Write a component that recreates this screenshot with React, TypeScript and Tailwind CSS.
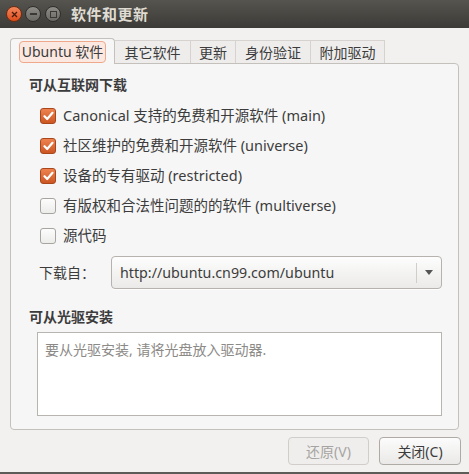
import React from "react";

const FONT = '"Noto Sans", "Noto Sans CJK SC", sans-serif';

const sources = [
  { label: "Canonical 支持的免费和开源软件 (main)", checked: true },
  { label: "社区维护的免费和开源软件 (universe)", checked: true },
  { label: "设备的专有驱动 (restricted)", checked: true },
  { label: "有版权和合法性问题的的软件 (multiverse)", checked: false },
  { label: "源代码", checked: false },
];

const tabs = ["其它软件", "更新", "身份验证", "附加驱动"];
const tabWidths = ["w-[76px]", "w-[45px]", "w-[75px]", "w-[74px]"];

function CheckBox({ checked }: { checked: boolean }) {
  if (checked) {
    return (
      <span className="flex h-[16px] w-[16px] items-center justify-center rounded-[3px] border border-[#a9461a] bg-gradient-to-b from-[#ee8350] to-[#cc5622]">
        <svg width="11" height="10" viewBox="0 0 11 10">
          <path d="M1.5 5.2 L4.2 8 L9.5 1.8" fill="none" stroke="#fff" strokeWidth="2.2" strokeLinecap="round" strokeLinejoin="round" />
        </svg>
      </span>
    );
  }
  return <span className="block h-[16px] w-[16px] rounded-[3px] border border-[#a8a5a1] bg-gradient-to-b from-[#fcfcfc] to-[#ececeb]" />;
}

export default function App() {
  return (
    <div className="flex h-[474px] w-[469px] flex-col overflow-hidden bg-[#f2f1f0] text-[#3c3c3c]" style={{ fontFamily: FONT }}>
      {/* title bar */}
      <div className="flex h-[28px] shrink-0 items-center bg-gradient-to-b from-[#55544f] to-[#3c3b37] pl-[6px]">
        <span className="flex h-[16px] w-[16px] items-center justify-center rounded-full border border-[#6e2d12] bg-gradient-to-b from-[#f3865a] to-[#df4b16]">
          <svg width="7" height="7" viewBox="0 0 7 7">
            <path d="M1 1 L6 6 M6 1 L1 6" stroke="#4a1c08" strokeWidth="1.3" />
          </svg>
        </span>
        <span className="ml-[3px] flex h-[16px] w-[16px] items-center justify-center rounded-full border border-[#2f2e2b] bg-gradient-to-b from-[#8f8d88] to-[#6b6964]">
          <span className="block h-[1.5px] w-[7px] bg-[#3a3935]" />
        </span>
        <span className="ml-[4px] flex h-[16px] w-[16px] items-center justify-center rounded-full border border-[#2f2e2b] bg-gradient-to-b from-[#8f8d88] to-[#6b6964]">
          <span className="block h-[7px] w-[7px] border-[1.5px] border-[#3a3935]" />
        </span>
        <span className="ml-[10px] text-[15px] font-bold tracking-[0.5px] text-[#dfdbd2]">软件和更新</span>
      </div>

      {/* notebook */}
      <div className="flex flex-col px-[10px] pt-[10px]">
        <div className="flex h-[25px] items-end">
          <div className="relative z-10 -mb-px flex h-[26px] w-[105px] items-center justify-center rounded-t-[4px] border border-b-0 border-[#c4c1bd] bg-[#f6f6f6]">
            <span className="rounded-[4px] border border-[#f0a88a] bg-[#fbe9e1] px-[2px] text-[14px] leading-[20px]">Ubuntu 软件</span>
          </div>
          {tabs.map((t, i) => (
            <div key={t} className={`flex h-[23px] items-center justify-center border-r border-t border-[#d5d2cf] bg-[#eeedec] text-[14px] ${tabWidths[i]}`}>
              {t}
            </div>
          ))}
        </div>
        <div className="flex h-[367px] flex-col rounded-b-[4px] rounded-tr-[4px] border border-[#c4c1bd] bg-[#f6f6f6] pl-[18px] pr-[14px] pt-[11px]">
          <div className="text-[14px] font-bold leading-[20px]">可从互联网下载</div>
          <div className="mt-[6px] flex flex-col pl-[11px]">
            {sources.map((s) => (
              <div key={s.label} className="flex h-[30px] items-center gap-[7px]">
                <CheckBox checked={s.checked} />
                <span className="text-[14.5px]">{s.label}</span>
              </div>
            ))}
          </div>
          <div className="mt-[5px] flex h-[33px] items-center pl-[10px]">
            <span className="w-[72px] text-[14px]">下载自：</span>
            <div className="flex h-[33px] w-[331px] items-center rounded-[4px] border border-[#b6b2ad] bg-gradient-to-b from-[#fdfdfd] to-[#ebeae8] shadow-[0_1px_0_rgba(255,255,255,0.8)]">
              <span className="flex-1 pl-[8px] text-[14.25px]">http://ubuntu.cn99.com/ubuntu</span>
              <span className="h-[20px] w-px bg-[#d0cdca]" />
              <span className="flex w-[24px] justify-center">
                <svg width="8" height="5" viewBox="0 0 8 5">
                  <path d="M0 0 H8 L4 5 Z" fill="#555" />
                </svg>
              </span>
            </div>
          </div>
          <div className="mt-[18px] text-[14px] font-bold leading-[20px]">可从光驱安装</div>
          <div className="ml-[8px] mt-[5px] h-[84px] w-[405px] border border-[#b8b5b1] bg-white px-[7px] pt-[6px] text-[14px] text-[#8c8a87]">
            要从光驱安装, 请将光盘放入驱动器.
          </div>
        </div>
      </div>

      {/* buttons */}
      <div className="mt-[7px] flex justify-end gap-[10px] pr-[8px]">
        <div className="flex h-[28px] w-[81px] items-center justify-center rounded-[4px] border border-[#d0cdca] bg-[#efeeed] text-[14px] text-[#a6a4a1]">还原(V)</div>
        <div className="flex h-[28px] w-[82px] items-center justify-center rounded-[4px] border border-[#aeaaa5] bg-gradient-to-b from-[#fcfcfc] to-[#eae9e7] text-[14px]">关闭(C)</div>
      </div>
      <div className="mt-auto h-[2px] bg-[#5e5c58]" />
    </div>
  );
}
